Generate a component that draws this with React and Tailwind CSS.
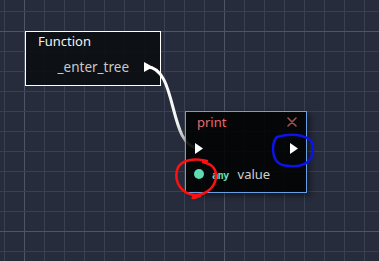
import React from "react";

const W = 379;
const H = 261;

// grid lines of the graph canvas
const xs = Array.from({ length: 19 }, (_, i) => 4 + i * 20);
const ys = Array.from({ length: 13 }, (_, i) => 11 + i * 20);

function Grid() {
  return (
    <svg className="absolute inset-0" width={W} height={H}>
      {xs.map((x) => (
        <line
          key={"x" + x}
          x1={x + 0.5}
          y1={0}
          x2={x + 0.5}
          y2={H}
          stroke={x === 24 || x === 224 ? "#4d5566" : "#394051"}
          strokeWidth="1"
        />
      ))}
      {ys.map((y) => (
        <line
          key={"y" + y}
          x1={0}
          y1={y + 0.5}
          x2={W}
          y2={y + 0.5}
          stroke={y === 31 || y === 231 ? "#4d5566" : "#394051"}
          strokeWidth="1"
        />
      ))}
    </svg>
  );
}

function Play({ className = "" }) {
  return (
    <svg width="8" height="11" viewBox="0 0 8 11" className={className}>
      <polygon points="0,0 8,5.5 0,11" fill="#ffffff" />
    </svg>
  );
}

function Connection() {
  return (
    <svg className="absolute inset-0 pointer-events-none" width={W} height={H}>
      <defs>
        <linearGradient id="wire" x1="0" y1="0" x2="0" y2="1">
          <stop offset="0" stopColor="#ffffff" />
          <stop offset="0.7" stopColor="#f2f2f2" />
          <stop offset="1" stopColor="#9a9a9a" />
        </linearGradient>
      </defs>
      <path
        d="M147 67 C178 67 168 148 199 148"
        fill="none"
        stroke="url(#wire)"
        strokeWidth="3"
        strokeLinecap="round"
      />
    </svg>
  );
}

function Annotations() {
  return (
    <svg className="absolute inset-0 pointer-events-none" width={W} height={H}>
      <path
        d="M207 161 C196 158 180 159 177 170 C174 183 182 194 195 195 C208 195 217 185 216 174 C215 167 211 164 203 162 M195 195 C193 197 192 198 193 198 C195 198 197 197 200 196"
        fill="none"
        stroke="#ff1010"
        strokeWidth="2.5"
        strokeLinecap="round"
        strokeLinejoin="round"
      />
      <path
        d="M277 137 C288 134 300 134 309 139 C314 143 314 152 311 158 C307 164 299 167 290 166 C282 166 276 163 274 156 C272 149 273 141 277 137"
        fill="none"
        stroke="#0a14e8"
        strokeWidth="2.5"
        strokeLinecap="round"
        strokeLinejoin="round"
      />
    </svg>
  );
}

export default function App() {
  return (
    <div
      className="relative w-[379px] h-[261px] overflow-hidden bg-[#262c3b]"
      style={{ fontFamily: '"Noto Sans", "DejaVu Sans", sans-serif' }}
    >
      <Grid />

      {/* Function node */}
      <div className="absolute left-[25px] top-[31px] w-[136px] h-[55px] border border-white bg-[#0b0d12]/90 flex flex-col pt-[1px] pl-[12px] pr-[7px] gap-[10px]">
        <div className="h-[16px] leading-[16px] text-[13px] text-[#f2f2f2]">Function</div>
        <div className="h-[16px] flex items-center justify-end gap-[15px]">
          <span className="leading-[16px] text-[13.5px] text-[#c9c9c9]">_enter_tree</span>
          <svg width="9" height="10" viewBox="0 0 9 10">
            <polygon points="0,0 9,5 0,10" fill="#ffffff" />
          </svg>
        </div>
      </div>

      <Connection />

      {/* print node */}
      <div className="absolute left-[185px] top-[111px] w-[122px] h-[82px] border border-[#6b9fe3] bg-black/85 shadow-[3px_3px_6px_rgba(0,0,0,0.45)] flex flex-col pt-[2px] gap-[10px]">
        <div className="h-[16px] flex items-center justify-between pl-[11px] pr-[9px]">
          <span className="leading-[16px] text-[13px] text-[#e56b6b]">print</span>
          <svg width="10" height="10" viewBox="0 0 10 10">
            <path d="M1 1 L9 9 M9 1 L1 9" stroke="#a3524f" strokeWidth="1.6" strokeLinecap="round" />
          </svg>
        </div>
        <div className="h-[16px] flex items-center justify-between pl-[9px] pr-[8px]">
          <Play />
          <Play />
        </div>
        <div className="h-[16px] flex items-center pl-[8px]">
          <span className="w-[10px] h-[10px] rounded-full bg-[#5fdcb2]" />
          <span
            className="ml-[8px] text-[10.5px] leading-[10px] font-bold text-[#5fdcb2] tracking-[-0.8px] mt-[1px]"
            style={{ fontFamily: '"DejaVu Sans Mono", monospace' }}
          >
            any
          </span>
          <span className="ml-[9px] leading-[16px] text-[13px] text-[#cfcfcf]">value</span>
        </div>
      </div>

      <Annotations />
    </div>
  );
}
